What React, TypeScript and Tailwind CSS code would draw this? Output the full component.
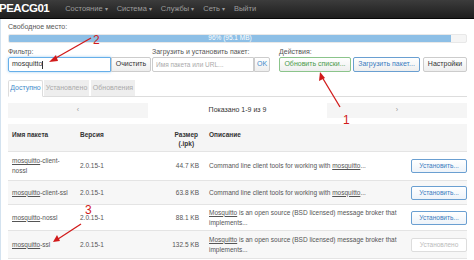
import React from "react";

const font = { fontFamily: '"Liberation Sans", Arial, sans-serif' };

function NavItem({ label, caret = true }: { label: string; caret?: boolean }) {
  return (
    <span className="text-[7.5px] text-[#9d9d9d] whitespace-nowrap">
      {label}
      {caret && <span className="ml-[2px] text-[6px]">▾</span>}
    </span>
  );
}

function Btn({ children, cls }: { children: React.ReactNode; cls: string }) {
  return (
    <div
      className={`h-[15px] shrink-0 flex items-center justify-center rounded-[2px] border text-[7px] whitespace-nowrap bg-gradient-to-b from-white to-[#eeeeee] ${cls}`}
    >
      {children}
    </div>
  );
}

type Row = { name: string; rest: string; size: string; desc: React.ReactNode; installed?: boolean; stripe?: boolean; h: string };

const rows: Row[] = [
  {
    name: "mosquitto",
    rest: "-client-nossl",
    size: "44.7 KB",
    h: "h-[29px]",
    desc: (
      <>
        Command line client tools for working with <span className="underline">mosquitto</span>...
      </>
    ),
  },
  {
    name: "mosquitto",
    rest: "-client-ssl",
    size: "63.8 KB",
    stripe: true,
    h: "h-[24px]",
    desc: (
      <>
        Command line client tools for working with <span className="underline">mosquitto</span>...
      </>
    ),
  },
  {
    name: "mosquitto",
    rest: "-nossl",
    size: "88.1 KB",
    h: "h-[26px]",
    desc: (
      <>
        <span className="underline">Mosquitto</span> is an open source (BSD licensed) message broker that implements...
      </>
    ),
  },
  {
    name: "mosquitto",
    rest: "-ssl",
    size: "132.5 KB",
    stripe: true,
    installed: true,
    h: "h-[28px]",
    desc: (
      <>
        <span className="underline">Mosquitto</span> is an open source (BSD licensed) message broker that implements...
      </>
    ),
  },
];

export default function App() {
  return (
    <div className="relative w-[474px] h-[260px] overflow-hidden bg-white text-[#333]" style={font}>
      {/* navbar */}
      <div className="h-[19px] flex items-center bg-gradient-to-b from-[#3c3c3c] to-[#1e1e1e] border-b border-[#080808]">
        <span className="text-[11.5px] font-bold text-white tracking-[-0.5px] ml-[-1px] mr-[16px] leading-none">PEACG01</span>
        <div className="flex gap-[9px] items-center">
          <NavItem label="Состояние" />
          <NavItem label="Система" />
          <NavItem label="Службы" />
          <NavItem label="Сеть" />
          <NavItem label="Выйти" caret={false} />
        </div>
      </div>

      <div className="border-l border-[#d3e2ef] min-h-[241px] px-[7px]">
        <div className="text-[7px] text-[#555] pt-[3px] leading-[9px]">Свободное место:</div>
        <div className="mt-[3px] h-[9px] flex rounded-[2px] bg-[#f5f5f5] border border-[#e8e8e8] overflow-hidden">
          <div className="w-[442px] bg-[#8dbfe6] flex items-center justify-center text-[6.5px] text-white leading-none">
            96% (95.1 MB)
          </div>
        </div>

        {/* filter row */}
        <div className="mt-[4px] flex">
          <div className="flex flex-col w-[143px]">
            <div className="text-[7px] text-[#555] leading-[9px]">Фильтр:</div>
            <div className="flex mt-[1px]">
              <div className="w-[103px] h-[15px] border border-[#66afe9] rounded-l-[2px] shadow-[0_0_3px_rgba(102,175,233,0.6)] flex items-center px-[3px] text-[7px] text-[#333]">
                mosquitto<span className="w-px h-[8px] bg-[#333]" />
              </div>
              <Btn cls="w-[40px] border-[#ccc] text-[#333] rounded-l-none">Очистить</Btn>
            </div>
          </div>
          <div className="flex flex-col w-[126px] ml-[1px]">
            <div className="text-[7px] text-[#555] leading-[9px] whitespace-nowrap">Загрузить и установить пакет:</div>
            <div className="flex mt-[1px]">
              <div className="w-[102px] h-[15px] border border-[#ccc] rounded-l-[2px] flex items-center px-[3px] text-[6.5px] text-[#aaa]">
                Имя пакета или URL...
              </div>
              <Btn cls="w-[16px] border-[#ccc] text-[#428bca] rounded-l-none">OK</Btn>
            </div>
          </div>
          <div className="flex flex-col ml-[8px]">
            <div className="text-[7px] text-[#555] leading-[9px]">Действия:</div>
            <div className="flex mt-[1px] gap-[2px]">
              <Btn cls="w-[72px] border-[#8bc48b] text-[#4a9a4a]">Обновить списки...</Btn>
              <Btn cls="w-[67px] border-[#6a9fd1] text-[#3a7bc0]">Загрузить пакет...</Btn>
              <Btn cls="w-[44px] ml-[1px] border-[#ccc] text-[#333]">Настройки</Btn>
            </div>
          </div>
        </div>

        {/* tabs */}
        <div className="mt-[8px] h-[17px] flex items-end border-b border-[#ddd]">
          <div className="h-[17px] w-[35px] flex items-center justify-center border border-[#ddd] border-b-white mb-[-1px] bg-white text-[7px] text-[#428bca] rounded-t-[2px]">
            Доступно
          </div>
          <div className="h-[16px] w-[45px] ml-[1px] flex items-center justify-center bg-[#eeeeee] text-[7px] text-[#aaa]">Установлено</div>
          <div className="h-[16px] w-[44px] ml-[2px] flex items-center justify-center bg-[#eeeeee] text-[7px] text-[#aaa]">Обновления</div>
        </div>

        {/* pagination */}
        <div className="mt-[6px] h-[15px] flex items-center">
          <div className="w-[140px] h-[15px] bg-[#f5f5f5] flex items-center justify-center text-[7px] text-[#999]">‹</div>
          <div className="flex-1 text-center text-[7px] text-[#333]">Показано 1-9 из 9</div>
          <div className="w-[140px] h-[15px] bg-[#f5f5f5] flex items-center justify-center text-[7px] text-[#999]">›</div>
        </div>

        {/* table */}
        <div className="mt-[6px] flex flex-col text-[6.5px]">
          <div className="h-[27px] grid grid-cols-[68px_84px_44px_1fr_62px] bg-[#f5f5f5] font-bold text-[#333] leading-[9px]">
            <div className="pl-[4px] pt-[6px]">Имя пакета</div>
            <div className="pl-[4px] pt-[6px]">Версия</div>
            <div className="pr-[6px] pt-[6px] flex flex-col items-end">
              <span className="flex flex-col items-center">
                <span>Размер</span>
                <span>(.ipk)</span>
              </span>
            </div>
            <div className="pl-[5px] pt-[6px]">Описание</div>
            <div />
          </div>
          {rows.map((r, i) => (
            <div
              key={i}
              className={`grid grid-cols-[68px_84px_44px_1fr_62px] border-t border-[#e4e4e4] items-center leading-[10px] ${r.h} ${
                r.stripe ? "bg-[#f7f7f7]" : "bg-white"
              }`}
            >
              <div className="pl-[4px] pr-[2px] text-[#555]">
                <span className="underline">{r.name}</span>
                {r.rest}
              </div>
              <div className="pl-[4px] text-[#555]">2.0.15-1</div>
              <div className="pr-[5px] text-right text-[#555] whitespace-nowrap">{r.size}</div>
              <div className="pl-[5px] pr-[4px] text-[#555]">{r.desc}</div>
              <div className="flex justify-end">
                {r.installed ? (
                  <div className="w-[56px] h-[14px] flex items-center justify-center rounded-[2px] border border-[#ddd] text-[6.5px] text-[#bbb] bg-white">
                    Установлено
                  </div>
                ) : (
                  <div className="w-[56px] h-[14px] flex items-center justify-center rounded-[2px] border border-[#6a9fd1] text-[6.5px] text-[#3a7bc0] bg-gradient-to-b from-white to-[#eef3f9]">
                    Установить...
                  </div>
                )}
              </div>
            </div>
          ))}
          <div className="border-t border-[#e4e4e4]" />
        </div>
      </div>

      {/* annotations */}
      <svg className="absolute left-0 top-0 pointer-events-none" width="474" height="260">
        <g stroke="#d11a1a" strokeWidth="1.3" fill="#d11a1a">
          <line x1="91" y1="38" x2="54" y2="59" />
          <polygon points="49,62 56,55 58,61" stroke="none" />
          <line x1="340" y1="107" x2="322" y2="77" />
          <polygon points="320,72 319,81 325,78" stroke="none" />
          <line x1="81" y1="224" x2="58" y2="239" />
          <polygon points="53,242 57,235 60,241" stroke="none" />
        </g>
        <text x="93" y="44" fontSize="12" fill="#d11a1a" fontFamily="Liberation Sans, Arial, sans-serif">2</text>
        <text x="343" y="124" fontSize="12" fill="#d11a1a" fontFamily="Liberation Sans, Arial, sans-serif">1</text>
        <text x="85" y="214" fontSize="12" fill="#d11a1a" fontFamily="Liberation Sans, Arial, sans-serif">3</text>
      </svg>
    </div>
  );
}
